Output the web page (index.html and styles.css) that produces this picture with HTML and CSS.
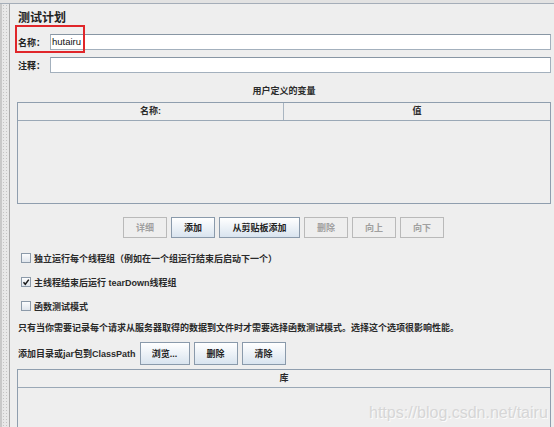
FILE: index.html
```html
<!DOCTYPE html>
<html lang="zh">
<head>
<meta charset="utf-8">
<title>测试计划</title>
<link rel="stylesheet" href="styles.css">
</head>
<body>
<div class="topbar"></div>
<div class="main">
  <div class="splitter"></div>
  <div class="panel">
    <div class="title">测试计划</div>
    <div class="field"><span class="label">名称：</span><div class="input">hutairu</div></div>
    <div class="field second"><span class="label">注释：</span><div class="input"></div></div>
    <div class="section-title">用户定义的变量</div>
    <div class="table vars">
      <div class="thead two"><div class="th">名称:</div><div class="th">值</div></div>
      <div class="tbody"></div>
    </div>
    <div class="btnrow">
      <button class="btn disabled w44">详细</button>
      <button class="btn w44">添加</button>
      <button class="btn w81">从剪贴板添加</button>
      <button class="btn disabled w44">删除</button>
      <button class="btn disabled w44">向上</button>
      <button class="btn disabled w44">向下</button>
    </div>
    <div class="check"><span class="box"></span><span>独立运行每个线程组（例如在一个组运行结束后启动下一个）</span></div>
    <div class="check"><span class="box checked"><svg viewBox="0 0 10 10" width="10" height="10"><path d="M2.5 5.2 L4.3 7.3 L7.8 2.6" fill="none" stroke="#1a1a1a" stroke-width="1.5"/></svg></span><span>主线程结束后运行 tearDown线程组</span></div>
    <div class="check"><span class="box"></span><span>函数测试模式</span></div>
    <div class="note">只有当你需要记录每个请求从服务器取得的数据到文件时才需要选择函数测试模式。选择这个选项很影响性能。</div>
    <div class="cprow">
      <span class="cplabel">添加目录或jar包到ClassPath</span>
      <button class="btn w50 tall">浏览...</button>
      <button class="btn w44 tall">删除</button>
      <button class="btn w44 tall">清除</button>
    </div>
    <div class="table lib">
      <div class="thead one"><div class="th">库</div></div>
      <div class="tbody"></div>
    </div>
  </div>
</div>
<div class="annot"></div>
<div class="watermark">https://blog.csdn.net/tairu</div>
</body>
</html>
```
FILE: styles.css
```css
* { box-sizing: border-box; }
html, body { margin: 0; padding: 0; }
body {
  width: 554px;
  height: 427px;
  overflow: hidden;
  background: #eeeeee;
  font-family: "Liberation Sans", "Noto Sans CJK SC", sans-serif;
  font-size: 9px;
  font-weight: bold;
  color: #2a2a2a;
  position: relative;
}
.topbar {
  height: 4px;
  background: #e2e2e2;
  border-bottom: 1px solid #a4adb8;
}
.main {
  display: flex;
  height: 423px;
}
.splitter {
  width: 10px;
  flex: none;
  border-left: 2px solid #c8c8c8;
  border-right: 1px solid #a9a9a9;
  background-color: #e8e8e8;
  background-image: radial-gradient(#c4c4c4 0.6px, transparent 0.8px);
  background-size: 3px 3px;
}
.panel {
  flex: 1;
  padding: 0 3px 0 7px;
  display: flex;
  flex-direction: column;
}
.panel > * { flex: none; }
.title {
  font-size: 12px;
  line-height: 28px;
  height: 30px;
  color: #222;
  padding-left: 1px;
}
.field {
  display: flex;
  align-items: center;
  height: 16px;
}
.field.second { margin-top: 7px; }
.label {
  width: 33px;
  flex: none;
  padding-left: 1px;
  color: #222;
}
.input {
  flex: 1;
  height: 16px;
  background: #fff;
  border: 1px solid #a3b0bd;
  border-top-color: #8896a4;
  font-weight: normal;
  font-size: 9.5px;
  line-height: 14px;
  padding-left: 1px;
  color: #111;
}
.section-title {
  margin-top: 11px;
  text-align: center;
  line-height: 14px;
  height: 14px;
}
.table {
  margin-top: 4px;
  border: 1px solid #8f9eae;
  display: flex;
  flex-direction: column;
}
.table.vars { height: 102px; }
.table.lib { height: 70px; margin-top: 4px; }
.thead {
  display: grid;
  height: 18px;
  border-bottom: 1px solid #9aa8b6;
  background: #efefef;
}
.thead.two { grid-template-columns: 1fr 1fr; }
.thead.one { grid-template-columns: 1fr; }
.th {
  text-align: center;
  line-height: 16px;
  border-right: 1px solid #a9b5c1;
}
.th:last-child { border-right: none; }
.tbody { flex: 1; background: #eeeeee; }
.btnrow {
  margin-top: 13px;
  display: flex;
  gap: 4px;
  padding-left: 106px;
}
.btn {
  height: 21px;
  font-family: "Liberation Sans", "Noto Sans CJK SC", sans-serif;
  font-size: 9px;
  font-weight: bold;
  color: #222;
  border: 1px solid #8a9aab;
  background: linear-gradient(#ffffff, #d9e4ef);
  padding: 0;
  margin: 0;
}
.btn.disabled {
  color: #a0a0a0;
  border-color: #b9b9b9;
  background: #eeeeee;
}
.btn.tall { height: 23px; }
.w44 { width: 44px; }
.w50 { width: 50px; }
.w81 { width: 81px; }
.check {
  display: flex;
  align-items: center;
  height: 24px;
  padding-left: 4px;
}
.btnrow + .check { margin-top: 8px; }
.box {
  width: 10px;
  height: 10px;
  flex: none;
  border: 1px solid #8c9aa9;
  background: linear-gradient(#fbfcfd, #dfe5ec);
  margin-right: 3px;
  position: relative;
  display: flex;
}
.box svg { position: absolute; left: -1px; top: -1px; }
.note {
  height: 20px;
  line-height: 20px;
  padding-left: 1px;
}
.cprow {
  margin-top: 4px;
  display: flex;
  align-items: center;
  gap: 4px;
}
.cplabel { padding-left: 1px; }
.annot {
  position: absolute;
  left: 15px;
  top: 25px;
  width: 70px;
  height: 28px;
  border: 2px solid #e0262a;
}
.watermark {
  position: absolute;
  left: 369px;
  top: 403px;
  font-family: "Liberation Sans", sans-serif;
  font-weight: normal;
  font-size: 16px;
  line-height: 20px;
  color: #d6d6d6;
  text-shadow: 1px 1px 0 #fbfbfb;
}
```
